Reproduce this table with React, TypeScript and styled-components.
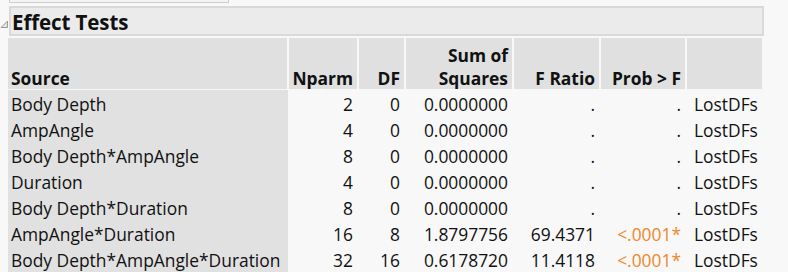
import React from "react";
import styled, { createGlobalStyle } from "styled-components";

const Global = createGlobalStyle`
  html, body { margin: 0; padding: 0; background: #f8f8f8; }
  body { font-family: "Open Sans", "Noto Sans", sans-serif; color: #111; }
`;

const Page = styled.div`
  width: 788px;
  height: 272px;
  overflow: hidden;
  display: flex;
  flex-direction: column;
`;

const TopStub = styled.div`
  margin-left: 9px;
  width: 218px;
  height: 2px;
  border: 1px solid #cfcfcf;
  border-top: none;
  background: #f4f4f4;
`;

const TitleRow = styled.div`
  display: flex;
  align-items: center;
  margin-top: 3px;
  height: 30px;
`;

const Toggle = styled.svg`
  width: 9px;
  height: 30px;
  flex: none;
`;

const TitleBar = styled.div`
  flex: none;
  width: 750px;
  height: 26px;
  border: 2px solid #d9d9d9;
  background: #ebebeb;
  display: flex;
  align-items: center;
  padding-left: 1px;
  box-sizing: content-box;
`;

const Title = styled.span`
  font-weight: 700;
  font-size: 20.5px;
  letter-spacing: -0.1px;
  line-height: 1;
  margin-top: 3px;
`;

const Table = styled.table`
  margin-top: 2px;
  margin-left: 8px;
  width: 754px;
  table-layout: fixed;
  border-collapse: collapse;
  font-size: 17.4px;
`;

const Th = styled.th<{ $align?: string }>`
  background: #e0e0e0;
  height: 51px;
  box-sizing: border-box;
  padding: 0 ${(p) => (p.$align === "left" ? "0" : "4px")} 0 ${(p) => (p.$align === "left" ? "3px" : "0")};
  vertical-align: bottom;
  text-align: ${(p) => p.$align || "right"};
  font-weight: 700;
  border-left: 2px solid #f8f8f8;
  border-bottom: 1px solid #f8f8f8;
  &:first-child { border-left: none; }
`;

const HeadLabel = styled.span`
  display: block;
  line-height: 25px;
  margin-bottom: -2px;
  white-space: nowrap;
`;

const Td = styled.td<{ $kind?: "source" | "num" | "note"; $sig?: boolean }>`
  height: 26px;
  box-sizing: border-box;
  padding: 2px ${(p) => (p.$kind === "num" ? "5px" : "0")} 0
    ${(p) => (p.$kind === "source" ? "3px" : p.$kind === "note" ? "8px" : "0")};
  line-height: 24px;
  white-space: nowrap;
  text-align: ${(p) => (p.$kind === "num" ? "right" : "left")};
  background: ${(p) => (p.$kind === "source" ? "#e1e1e1" : "transparent")};
  color: ${(p) => (p.$sig ? "#f0872a" : "#111")};
`;

type Row = [string, string, string, string, string, string];

const rows: Row[] = [
  ["Body Depth", "2", "0", "0.0000000", ".", "."],
  ["AmpAngle", "4", "0", "0.0000000", ".", "."],
  ["Body Depth*AmpAngle", "8", "0", "0.0000000", ".", "."],
  ["Duration", "4", "0", "0.0000000", ".", "."],
  ["Body Depth*Duration", "8", "0", "0.0000000", ".", "."],
  ["AmpAngle*Duration", "16", "8", "1.8797756", "69.4371", "<.0001*"],
  ["Body Depth*AmpAngle*Duration", "32", "16", "0.6178720", "11.4118", "<.0001*"],
];

const widths = [280, 70, 47, 108, 87, 86, 76];

export default function App() {
  return (
    <Page>
      <Global />
      <TopStub />
      <TitleRow>
        <Toggle viewBox="0 0 9 30">
          <path d="M1 21.5 L7.5 15 L7.5 21.5 Z" fill="#e4e4e4" stroke="#9a9a9a" strokeWidth="1" />
        </Toggle>
        <TitleBar>
          <Title>Effect Tests</Title>
        </TitleBar>
      </TitleRow>
      <Table>
        <colgroup>
          {widths.map((w, i) => (
            <col key={i} style={{ width: w }} />
          ))}
        </colgroup>
        <thead>
          <tr>
            <Th $align="left"><HeadLabel>Source</HeadLabel></Th>
            <Th><HeadLabel>Nparm</HeadLabel></Th>
            <Th><HeadLabel>DF</HeadLabel></Th>
            <Th>
              <HeadLabel>Sum of</HeadLabel>
              <HeadLabel>Squares</HeadLabel>
            </Th>
            <Th><HeadLabel>F Ratio</HeadLabel></Th>
            <Th><HeadLabel>Prob &gt; F</HeadLabel></Th>
            <Th $align="left"></Th>
          </tr>
        </thead>
        <tbody>
          {rows.map((r) => (
            <tr key={r[0]}>
              <Td $kind="source">{r[0]}</Td>
              <Td $kind="num">{r[1]}</Td>
              <Td $kind="num">{r[2]}</Td>
              <Td $kind="num">{r[3]}</Td>
              <Td $kind="num">{r[4]}</Td>
              <Td $kind="num" $sig={r[5].startsWith("<")}>
                {r[5]}
              </Td>
              <Td $kind="note">LostDFs</Td>
            </tr>
          ))}
        </tbody>
      </Table>
    </Page>
  );
}
